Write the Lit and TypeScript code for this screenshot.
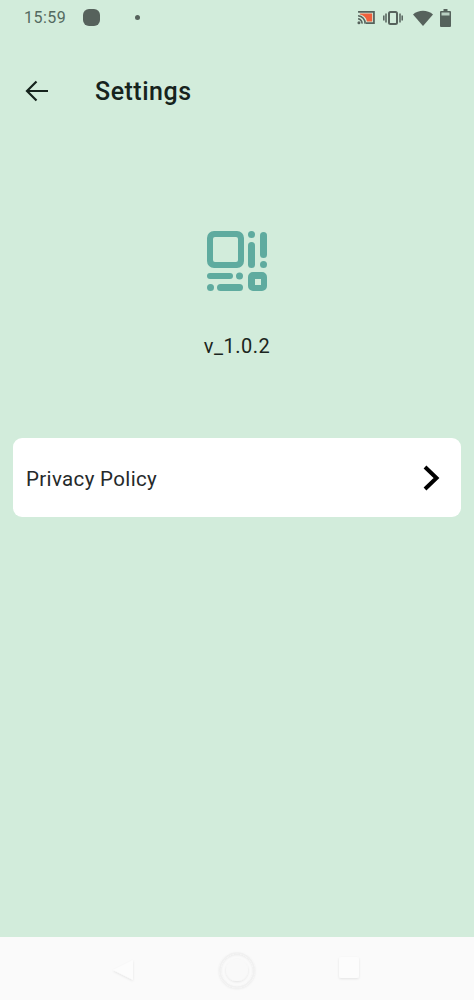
import { LitElement, html, css } from "lit";
import { customElement } from "lit/decorators.js";

@customElement("app-root")
export class AppRoot extends LitElement {
  static styles = css`
    :host {
      display: flex;
      flex-direction: column;
      width: 474px;
      height: 1000px;
      background: #d2ecdb;
      font-family: Roboto, "Liberation Sans", sans-serif;
      overflow: hidden;
    }
    .status {
      height: 35px;
      display: flex;
      align-items: center;
      padding: 0 23px 0 24px;
      flex: none;
    }
    .time { font-size: 16px; color: #54695f; letter-spacing: 0.5px; width: 59px; }
    .blob { width: 17px; height: 17px; border-radius: 6px; background: #56625c; }
    .dot { width: 5px; height: 5px; border-radius: 50%; background: #56625c; margin-left: 35px; }
    .spacer { flex: 1; }
    .sys { display: flex; align-items: center; gap: 8px; }
    .wifi { margin-left: 2px; }
    .batt { margin-left: -1px; }
    .appbar {
      height: 74px;
      margin-top: 19px;
      display: flex;
      align-items: center;
      flex: none;
    }
    .back { margin-left: 25px; width: 24px; height: 24px; display: block; }
    .title { margin-left: 46px; font-size: 25px; font-weight: 500; color: #16231d; letter-spacing: 0.5px; }
    .main { flex: 1; display: flex; flex-direction: column; }
    .about {
      margin-top: 103px;
      display: flex;
      flex-direction: column;
      align-items: center;
    }
    .logo { display: block; width: 60px; height: 60px; }
    .version { margin-top: 41px; font-size: 20px; color: #1b2520; letter-spacing: 0.5px; line-height: 28px; }
    .card {
      margin: 78px 13px 0;
      height: 79px;
      background: #fff;
      border-radius: 9px;
      display: flex;
      align-items: center;
      justify-content: space-between;
      padding: 0 20px 0 13px;
    }
    .card span { font-size: 20.5px; color: #25292a; letter-spacing: 0.35px; position: relative; top: 1px; }
    .chev { display: block; width: 18px; height: 26px; }
    .nav {
      flex: none;
      height: 63px;
      background: #fafafa;
      display: flex;
      align-items: center;
      justify-content: center;
    }
    .nav svg { display: block; width: 290px; height: 63px; }
  `;

  render() {
    return html`
      <div class="status">
        <span class="time">15:59</span>
        <div class="blob"></div>
        <div class="dot"></div>
        <div class="spacer"></div>
        <div class="sys">
          <svg width="18" height="15" viewBox="0 0 20 17">
            <path d="M1 2h18v13H10" fill="none" stroke="#56625c" stroke-width="2"/>
            <path d="M3 4h14v9h-6C10.500 8.500 7 5.500 3 5z" fill="#f0603c"/>
            <path d="M1 6.500a8.500 8.500 0 0 1 8 9M1 10a5 5 0 0 1 4.500 5.500" fill="none" stroke="#56625c" stroke-width="1.800"/>
            <circle cx="2" cy="14.500" r="1.700" fill="#56625c"/>
          </svg>
          <svg width="20" height="14" viewBox="0 0 20 14">
            <rect x="6" y="1" width="8" height="12" rx="1.500" fill="none" stroke="#56625c" stroke-width="2"/>
            <path d="M3 2.500v9M17 2.500v9M0.800 4.500v5M19.200 4.500v5" stroke="#56625c" stroke-width="1.500"/>
          </svg>
          <svg class="wifi" width="20" height="16" viewBox="0 0 20 16">
            <path d="M0 4.500C5.500-.5 14.500-.5 20 4.500L10 16z" fill="#56625c"/>
          </svg>
          <svg class="batt" width="11" height="18" viewBox="0 0 11 18">
            <path d="M3.500 0h4v2h2.500a1 1 0 0 1 1 1v14a1 1 0 0 1-1 1H1a1 1 0 0 1-1-1V3a1 1 0 0 1 1-1h2.500z" fill="#56625c"/>
            <rect x="1.500" y="3.500" width="8" height="3" fill="#b9cfc2"/>
          </svg>
        </div>
      </div>
      <div class="appbar">
        <svg class="back" viewBox="0 0 24 24" fill="none" stroke="#16231d" stroke-width="2.200">
          <path d="M23 12H2M11.500 2.500 2 12l9.500 9.500"/>
        </svg>
        <div class="title">Settings</div>
      </div>
      <div class="main">
        <div class="about">
          <svg class="logo" viewBox="0 0 60 60" fill="#5fab9f">
            <path fill-rule="evenodd" d="M7 0h23a7 7 0 0 1 7 7v23a7 7 0 0 1-7 7H7a7 7 0 0 1-7-7V7a7 7 0 0 1 7-7zM8 6a2 2 0 0 0-2 2v21a2 2 0 0 0 2 2h21a2 2 0 0 0 2-2V8a2 2 0 0 0-2-2z"/>
            <circle cx="44.500" cy="3.500" r="3.500"/>
            <rect x="41" y="11" width="7" height="26" rx="3.500"/>
            <rect x="53" y="1" width="7" height="26" rx="3.500"/>
            <circle cx="56.500" cy="33.500" r="3.500"/>
            <rect x="0" y="42" width="26" height="6" rx="3"/>
            <circle cx="32.500" cy="45" r="3.500"/>
            <circle cx="3.500" cy="56.500" r="3.500"/>
            <rect x="10" y="53" width="26" height="7" rx="3.500"/>
            <path fill-rule="evenodd" d="M46 41h9a5 5 0 0 1 5 5v9a5 5 0 0 1-5 5h-9a5 5 0 0 1-5-5v-9a5 5 0 0 1 5-5zM48 48v6h6v-6z"/>
          </svg>
          <div class="version">v_1.0.2</div>
        </div>
        <div class="card">
          <span>Privacy Policy</span>
          <svg class="chev" viewBox="0 0 18 26" fill="none" stroke="#000" stroke-width="4">
            <path d="M2 2l11.500 11L2 24"/>
          </svg>
        </div>
      </div>
      <div class="nav">
        <svg viewBox="0 0 290 63">
          <defs>
            <filter id="s" x="-30%" y="-30%" width="160%" height="160%">
              <feDropShadow dx="0" dy="1" stdDeviation="1.200" flood-color="#000" flood-opacity="0.09"/>
            </filter>
          </defs>
          <g filter="url(#s)" fill="#fcfcfc">
            <path d="M41 23v20L21 33z"/>
            <circle cx="145" cy="33" r="17" fill="none" stroke="#f1f1f1" stroke-width="1.500"/>
            <circle cx="145" cy="33" r="11" fill="#f9f9f9"/>
            <rect x="247" y="20" width="20" height="21" rx="2"/>
          </g>
        </svg>
      </div>
    `;
  }
}
